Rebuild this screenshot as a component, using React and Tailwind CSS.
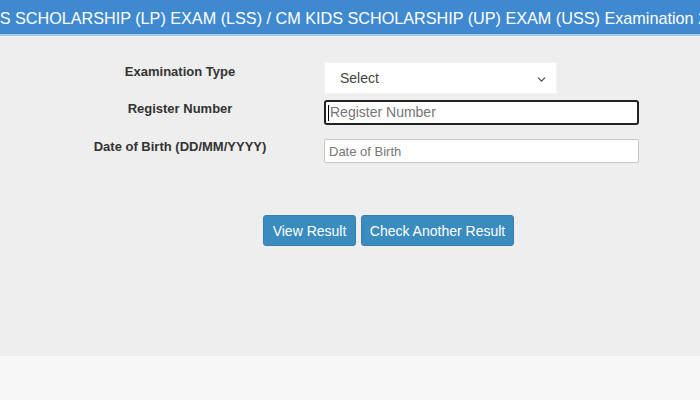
import { ChevronDown } from "lucide-react";

const labelCls = "w-[288px] text-center text-[13px] font-bold text-[#333]";

export default function App() {
  return (
    <div className="w-[700px] h-[400px] bg-[#f7f7f7] overflow-hidden font-['Liberation_Sans',Arial,sans-serif]">
      {/* HEADER */}
      <div className="h-[32px] bg-[#3f89d0] flex items-center overflow-hidden border-b-2 border-[#a9c9ea] box-content pt-[2px]">
        <div className="whitespace-nowrap text-white text-[16.2px] shrink-0 -ml-[57px]">
          CM KIDS SCHOLARSHIP (LP) EXAM (LSS) / CM KIDS SCHOLARSHIP (UP) EXAM (USS) Examination 2025
        </div>
      </div>

      {/* FORM */}
      <div className="h-[320px] bg-[#eeeeee] pt-[26px]">
        <div className="flex items-center">
          <div className="w-[36px]" />
          <div className={labelCls + " -mt-[12px]"}>Examination Type</div>
          <div className="relative w-[233px] h-[32px] bg-white border border-[#f2f2f2] flex items-center pl-[15px] text-[14px] text-[#444]">
            Select
            <ChevronDown size={13} strokeWidth={2.5} className="absolute right-[8px] top-[10px] text-[#555]" />
          </div>
        </div>

        <div className="flex items-center mt-[6px]">
          <div className="w-[36px]" />
          <div className={labelCls + " -mt-[8px]"}>Register Number</div>
          <div className="w-[315px] h-[25px] bg-white border-2 border-[#222] rounded-[3px] flex items-center pl-[2px] text-[14px] text-[#757575]">
            <span className="w-px h-[16px] bg-black mr-px" />
            Register Number
          </div>
        </div>

        <div className="flex items-center mt-[14px]">
          <div className="w-[36px]" />
          <div className={labelCls + " -mt-[8px]"}>Date of Birth (DD/MM/YYYY)</div>
          <div className="w-[315px] h-[24px] bg-white border border-[#c8c8c8] rounded-[2px] flex items-center pl-[4px] pt-px text-[13px] text-[#757575]">
            Date of Birth
          </div>
        </div>

        <div className="flex gap-[5px] pl-[263px] mt-[52px]">
          <button className="h-[31px] w-[93px] bg-[#3a8cbe] border border-[#3280b0] rounded-[3px] text-white text-[14px] pt-[2px]">
            View Result
          </button>
          <button className="h-[31px] w-[153px] bg-[#3a8cbe] border border-[#3280b0] rounded-[3px] text-white text-[14px] pt-[2px]">
            Check Another Result
          </button>
        </div>
      </div>
    </div>
  );
}
